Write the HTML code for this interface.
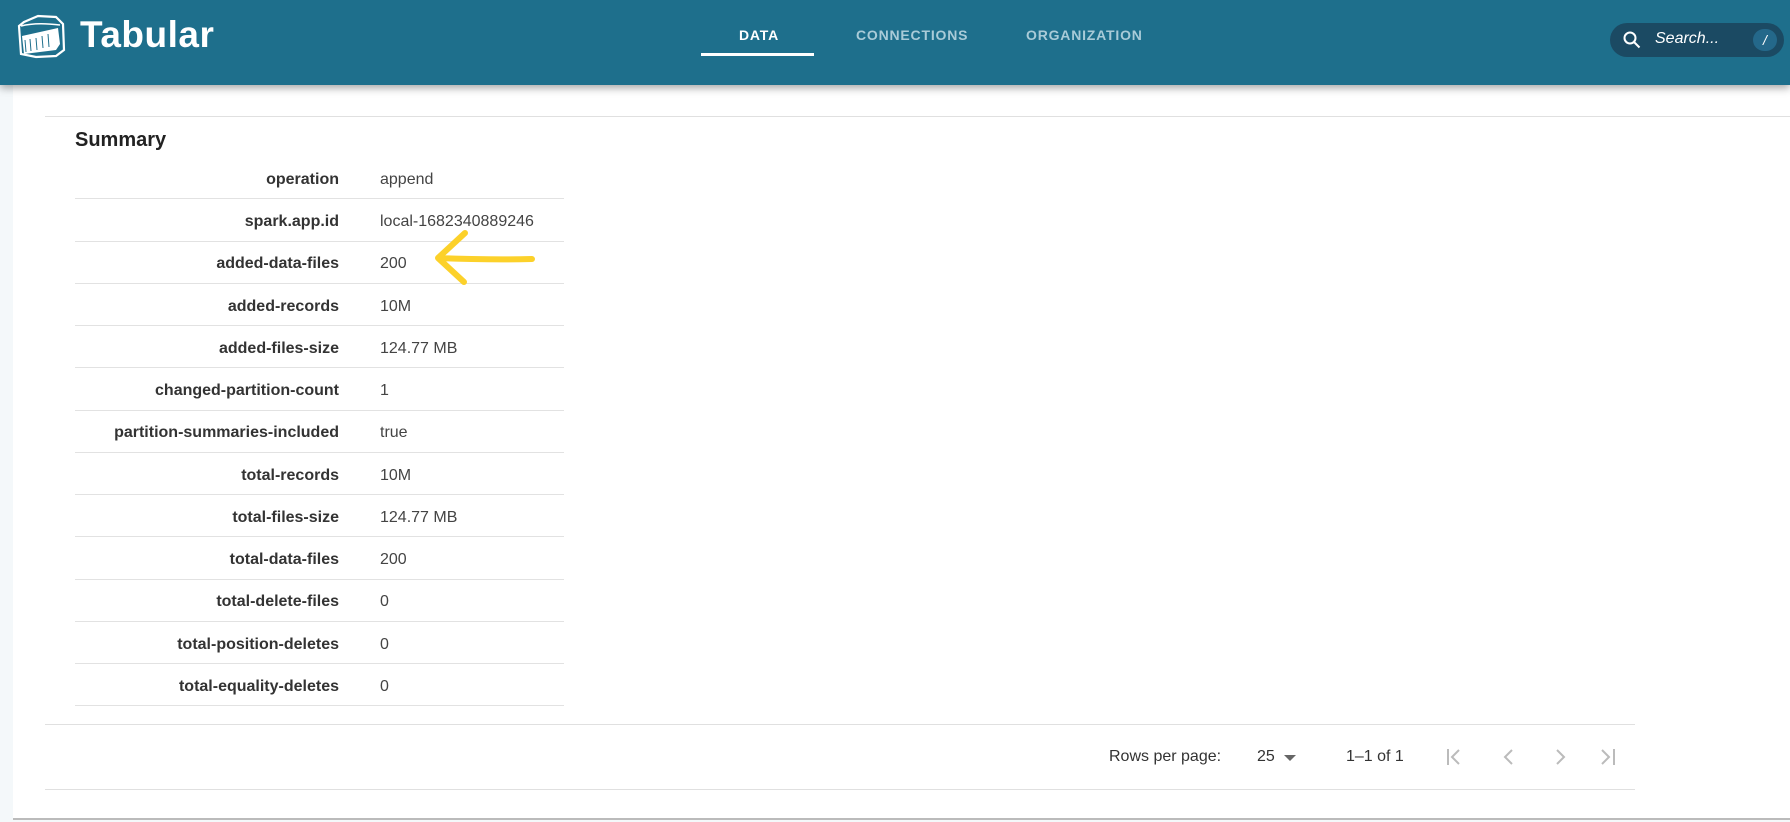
<!DOCTYPE html>
<html><head><meta charset="utf-8"><style>
*{box-sizing:border-box;margin:0;padding:0}
body{width:1790px;height:822px;overflow:hidden;background:#f4f8fa;font-family:"Liberation Sans",sans-serif;position:relative}
.hdr{position:absolute;left:0;top:0;width:1790px;height:85px;background:#1e6f8c;box-shadow:0 3px 8px rgba(0,0,0,.35);z-index:2}
.card{position:absolute;left:13px;top:85px;width:1777px;height:735px;background:#fff;border-bottom:2px solid #bbb}
.nav{position:absolute;top:27px;font-size:14px;font-weight:bold;letter-spacing:.8px;color:#a9cbd8}
.lbl{position:absolute;right:1451px;font-size:16px;font-weight:bold;color:#333;white-space:nowrap;margin-top:2px}
.val{position:absolute;left:380px;font-size:16px;color:#444;white-space:nowrap;margin-top:2px}
.ln{position:absolute;left:75px;width:489px;height:1px;background:#e2e2e2}
</style></head><body>
<div class="hdr">
<svg style="position:absolute;left:16px;top:14px" width="50" height="45" viewBox="0 0 50 45" fill="none" stroke="#fff" stroke-width="2.2">
<path d="M8 8 L22 2 L40 3 L47 10 L48 36 L40 42 L20 43 L5 40 L3 12 Z"/>
<path d="M5 12 Q20 8 44 11" stroke-width="1.5"/>
<path d="M6 22 L42 14 L44 30 L40 36 L8 40 Z" fill="#fff" stroke="none"/>
<path d="M9 26 L10 38 M14 25 L15 37 M20 24 L21 36 M26 22 L27 34 M32 20 L33 33" stroke="#1e6f8c" stroke-width="1"/>
</svg>
<div style="position:absolute;left:80px;top:14px;font-size:37px;font-weight:bold;color:#fff;letter-spacing:.5px">Tabular</div>
<div class="nav" style="left:739px;color:#fff">DATA</div>
<div style="position:absolute;left:701px;top:53px;width:113px;height:3px;background:#fff"></div>
<div class="nav" style="left:856px">CONNECTIONS</div>
<div class="nav" style="left:1026px">ORGANIZATION</div>
<div style="position:absolute;left:1610px;top:23px;width:174px;height:34px;border-radius:17px;background:#1b4a63">
<svg style="position:absolute;left:13px;top:8px" width="18" height="18" viewBox="0 0 18 18" fill="none" stroke="#fff" stroke-width="2"><circle cx="7" cy="7" r="5.5"/><path d="M11 11 L16.5 16.5"/></svg>
<span style="position:absolute;left:45px;top:7px;color:#fff;font-style:italic;font-size:16px">Search...</span>
<div style="position:absolute;left:143px;top:6px;width:24px;height:22px;border-radius:11px;background:#24688a;color:#fff;font-size:14px;text-align:center;line-height:22px;font-style:italic">/</div>
</div>
</div>
<div class="card"></div>
<div style="position:absolute;left:45px;top:116px;width:1745px;height:1px;background:#e0e0e0"></div>
<div style="position:absolute;left:75px;top:129px;font-size:20px;font-weight:bold;color:#222">Summary</div>
<div class="lbl" style="top:169px">operation</div><div class="val" style="top:169px">append</div>
<div class="ln" style="top:198px"></div>
<div class="lbl" style="top:211px">spark.app.id</div><div class="val" style="top:211px">local-1682340889246</div>
<div class="ln" style="top:241px"></div>
<div class="lbl" style="top:253px">added-data-files</div><div class="val" style="top:253px">200</div>
<div class="ln" style="top:283px"></div>
<div class="lbl" style="top:296px">added-records</div><div class="val" style="top:296px">10M</div>
<div class="ln" style="top:325px"></div>
<div class="lbl" style="top:338px">added-files-size</div><div class="val" style="top:338px">124.77 MB</div>
<div class="ln" style="top:367px"></div>
<div class="lbl" style="top:380px">changed-partition-count</div><div class="val" style="top:380px">1</div>
<div class="ln" style="top:410px"></div>
<div class="lbl" style="top:422px">partition-summaries-included</div><div class="val" style="top:422px">true</div>
<div class="ln" style="top:452px"></div>
<div class="lbl" style="top:465px">total-records</div><div class="val" style="top:465px">10M</div>
<div class="ln" style="top:494px"></div>
<div class="lbl" style="top:507px">total-files-size</div><div class="val" style="top:507px">124.77 MB</div>
<div class="ln" style="top:536px"></div>
<div class="lbl" style="top:549px">total-data-files</div><div class="val" style="top:549px">200</div>
<div class="ln" style="top:579px"></div>
<div class="lbl" style="top:591px">total-delete-files</div><div class="val" style="top:591px">0</div>
<div class="ln" style="top:621px"></div>
<div class="lbl" style="top:634px">total-position-deletes</div><div class="val" style="top:634px">0</div>
<div class="ln" style="top:663px"></div>
<div class="lbl" style="top:676px">total-equality-deletes</div><div class="val" style="top:676px">0</div>
<div class="ln" style="top:705px"></div>
<svg style="position:absolute;left:430px;top:228px" width="110" height="62" viewBox="0 0 110 62" fill="none" stroke="#fcd12a" stroke-width="6" stroke-linecap="round" stroke-linejoin="round"><path d="M102 31 Q60 32 8 30 M35 5 L8 30 L34 54"/></svg>
<div style="position:absolute;left:45px;top:724px;width:1590px;height:1px;background:#e0e0e0"></div>
<div style="position:absolute;left:45px;top:789px;width:1590px;height:1px;background:#e0e0e0"></div>
<div style="position:absolute;left:1109px;top:748px;font-size:16px;color:#333">Rows per page:</div>
<div style="position:absolute;left:1257px;top:748px;font-size:16px;color:#333">25</div>
<div style="position:absolute;left:1284px;top:755px;width:0;height:0;border-left:6px solid transparent;border-right:6px solid transparent;border-top:6px solid #666"></div>
<div style="position:absolute;left:1346px;top:748px;font-size:16px;color:#333">1–1 of 1</div>
<svg style="position:absolute;left:1440px;top:745px" width="180" height="24" viewBox="0 0 180 24" fill="none" stroke="#bbb" stroke-width="2"><path d="M8 4V20 M19 5 L12 12 L19 19"/><path d="M72 5 L65 12 L72 19"/><path d="M117 5 L124 12 L117 19"/><path d="M162 5 L169 12 L162 19 M174 4V20"/></svg>
</body></html>
